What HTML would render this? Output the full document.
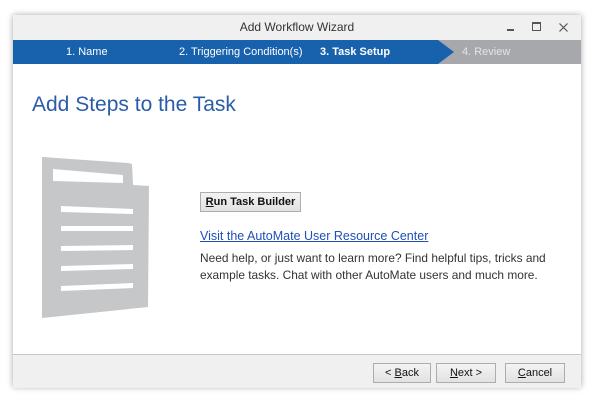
<!DOCTYPE html>
<html><head><style>
body{margin:0;width:600px;height:405px;background:#fff;position:relative;overflow:hidden;font-family:"Liberation Sans",sans-serif}
.win{position:absolute;left:13px;top:15px;width:568px;height:372px;background:#fff;box-shadow:0 0 6px rgba(0,0,0,.35)}
.title{position:absolute;left:0;top:0;width:568px;height:25px;background:#f0f0f0;text-align:center;font-size:12px;line-height:25px;color:#333}
.bar{position:absolute;left:0;top:25px;width:568px;height:24px;background:#a6a8ab}
.t{position:absolute;top:25px;font-size:11px;line-height:24px;color:#fff;white-space:nowrap}
.foot{position:absolute;left:0;top:339px;width:568px;height:33px;background:#f0f0f0;border-top:1px solid #c8c8c8}
.btn{position:absolute;top:8px;height:18px;background:linear-gradient(#f4f4f4,#e2e2e2);border:1px solid #adadad;font-size:11px;line-height:18px;text-align:center;color:#111}
</style></head><body>
<div class="win">
 <div class="title">Add Workflow Wizard</div>
 <div style="position:absolute;left:494px;top:14px;width:7px;height:2px;background:#555"></div>
 <div style="position:absolute;left:519px;top:7px;width:7px;height:6px;border:1px solid #555;border-top-width:2px"></div>
 <svg style="position:absolute;left:546px;top:8px" width="9" height="9"><path d="M0.5 0.5L8.5 8.5M8.5 0.5L0.5 8.5" stroke="#555" stroke-width="1.2"/></svg>
 <div class="bar"></div>
 <svg style="position:absolute;left:0;top:25px" width="568" height="24"><polygon points="0,0 425,0 441,12 425,24 0,24" fill="#1862ad"/></svg>
 <div class="t" style="left:53px">1. Name</div>
 <div class="t" style="left:166px">2. Triggering Condition(s)</div>
 <div class="t" style="left:307px;font-weight:bold">3. Task Setup</div>
 <div class="t" style="left:449px;color:#e4e4e4">4. Review</div>
 <div style="position:absolute;left:19px;top:78px;font-size:21px;color:#2a5caa">Add Steps to the Task</div>
 <svg style="position:absolute;left:0;top:0" width="200" height="320">
  <polygon points="29,142 115,149 116,175 29,175" fill="#c6c7c8"/>
  <polygon points="29,142 29,303 135,292 136,171 120,170 119,149 115,148" fill="#c6c7c8"/>
  <polygon points="40,154 110,160 110,168 40,166" fill="#fff"/>
  <g fill="#fff"><polygon points="48,191 120,194 120,199 48,197"/><polygon points="48,211 120,211 120,216 48,216"/><polygon points="48,231 120,230 120,235 48,236"/><polygon points="48,251 120,249 120,254 48,256"/><polygon points="48,271 120,268 120,273 48,276"/></g>
 </svg>
 <div class="btn" style="left:187px;top:177px;width:99px;font-weight:bold"><u>R</u>un Task Builder</div>
 <div style="position:absolute;left:187px;top:214px;font-size:12.5px;color:#1f4fb5;text-decoration:underline;white-space:nowrap">Visit the AutoMate User Resource Center</div>
 <div style="position:absolute;left:187px;top:235px;width:380px;font-size:11.9px;line-height:17px;color:#333;white-space:nowrap">Need help, or just want to learn more? Find helpful tips, tricks and<br>example tasks. Chat with other AutoMate users and much more.</div>
 <div class="foot">
  <div class="btn" style="left:360px;width:56px">&lt; <u>B</u>ack</div>
  <div class="btn" style="left:423px;width:58px"><u>N</u>ext &gt;</div>
  <div class="btn" style="left:492px;width:58px"><u>C</u>ancel</div>
 </div>
</div>
</body></html>
